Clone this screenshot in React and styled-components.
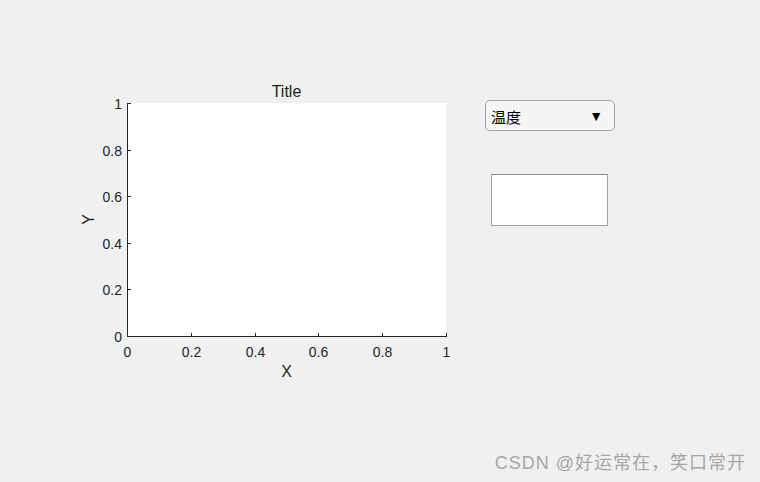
import React from "react";
import styled, { createGlobalStyle } from "styled-components";

const GlobalStyle = createGlobalStyle`
  html, body {
    margin: 0;
    padding: 0;
    background: #f0f0f0;
  }
`;

const Figure = styled.div`
  position: relative;
  width: 760px;
  height: 482px;
  box-sizing: border-box;
  padding: 75px 0 0 70px;
  display: flex;
  align-items: flex-start;
  background: #f0f0f0;
  font-family: "Liberation Sans", Arial, sans-serif;
  overflow: hidden;
`;

const Controls = styled.div`
  margin: 25px 0 0 25px;
  display: flex;
  flex-direction: column;
  align-items: flex-start;
  gap: 43px;
`;

const DropDown = styled.div`
  width: 130px;
  height: 31px;
  box-sizing: border-box;
  border: 1px solid #a3a3a3;
  border-radius: 5px;
  background: #f5f5f5;
  display: flex;
  align-items: center;
  justify-content: space-between;
  padding: 1px 11px 0 5px;
  font-family: "Liberation Sans", "Noto Sans CJK SC", sans-serif;
  font-size: 15px;
  color: #000;
`;

const Arrow = styled.span`
  font-size: 14px;
  color: #000;
`;

const EditField = styled.div`
  margin-left: 6px;
  width: 117px;
  height: 52px;
  box-sizing: border-box;
  border: 1px solid #a0a0a0;
  border-top-color: #8c8c8c;
  background: #fff;
`;

const Watermark = styled.div`
  position: absolute;
  right: 14px;
  bottom: 8px;
  font-family: "Liberation Sans", "Noto Sans CJK SC", sans-serif;
  font-size: 18px;
  letter-spacing: 1px;
  color: #a6a6a6;
  white-space: nowrap;
`;

const PX = 57;
const PY = 28;
const PW = 319;
const PH = 233;
const ticks = [0, 0.2, 0.4, 0.6, 0.8, 1];
const ink = "#262626";

const Axes = () => (
  <svg width="390" height="310" style={{ display: "block" }}>
    <rect x={PX} y={PY} width={PW} height={PH} fill="#fff" />
    <line x1={PX + 0.5} y1={PY} x2={PX + 0.5} y2={PY + PH + 0.5} stroke={ink} />
    <line x1={PX} y1={PY + PH + 0.5} x2={PX + PW + 1} y2={PY + PH + 0.5} stroke={ink} />
    {ticks.map((v) => {
      const y = Math.round(PY + PH - v * PH) + 0.5;
      const x = Math.round(PX + v * PW) + 0.5;
      return (
        <g key={v}>
          <line x1={PX} y1={y} x2={PX + 4} y2={y} stroke={ink} />
          <line x1={x} y1={PY + PH} x2={x} y2={PY + PH - 3} stroke={ink} />
          <text x={PX - 5} y={y} textAnchor="end" dominantBaseline="central" fontSize="14" fill={ink}>
            {v}
          </text>
          <text x={x} y={PY + PH + 16} textAnchor="middle" dominantBaseline="central" fontSize="14" fill={ink}>
            {v}
          </text>
        </g>
      );
    })}
    <text x={PX + PW / 2} y={296} textAnchor="middle" dominantBaseline="central" fontSize="16" fill={ink}>
      X
    </text>
    <text
      x={18}
      y={PY + PH / 2}
      textAnchor="middle"
      dominantBaseline="central"
      fontSize="16"
      fill={ink}
      transform={`rotate(-90 18 ${PY + PH / 2})`}
    >
      Y
    </text>
    <text x={PX + PW / 2} y={16} textAnchor="middle" dominantBaseline="central" fontSize="16" fill="#1a1a1a">
      Title
    </text>
  </svg>
);

export default function App() {
  return (
    <>
      <GlobalStyle />
      <Figure>
        <Axes />
        <Controls>
          <DropDown>
            <span>温度</span>
            <Arrow>▼</Arrow>
          </DropDown>
          <EditField />
        </Controls>
        <Watermark>CSDN @好运常在，笑口常开</Watermark>
      </Figure>
    </>
  );
}
